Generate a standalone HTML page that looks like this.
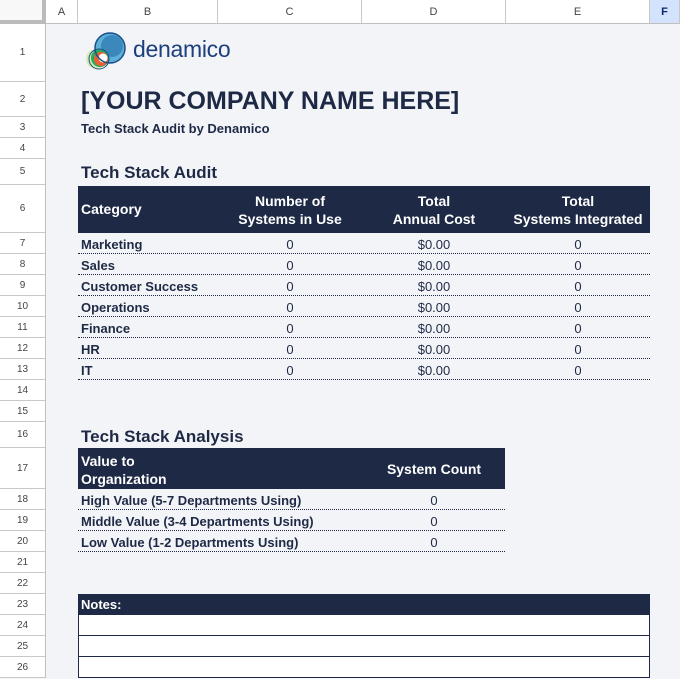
<!DOCTYPE html>
<html><head><meta charset="utf-8"><style>
*{margin:0;padding:0;box-sizing:border-box}
body{width:680px;height:679px;overflow:hidden;background:#f3f4f8;font-family:"Liberation Sans",Arial,sans-serif;position:relative;color:#1e2a45}
.a{position:absolute}
.ch{position:absolute;top:0;height:24px;background:#fff;border-right:1px solid #c8c8c8;border-bottom:1px solid #c0c0c0;font-size:11px;color:#444;text-align:center;line-height:24px}
.rh{position:absolute;left:0;width:46px;background:#fff;border-right:1px solid #c0c0c0;border-bottom:1px solid #c8c8c8;font-size:10px;color:#444;text-align:center}
.hd{position:absolute;background:#1e2a45;color:#fff;font-weight:bold;font-size:14px}
.t{position:absolute;font-size:13px;font-weight:bold;white-space:nowrap}
.n{position:absolute;font-size:13px;text-align:center}
.dl{position:absolute;height:0;border-top:1px dotted #1e2a45}
</style></head><body>
<div class="ch" style="left:0;width:46px;background:#f8f8f8;border-right:4px solid #bbb;border-bottom:4px solid #bbb"></div>
<div class="ch" style="left:46px;width:32px">A</div>
<div class="ch" style="left:78px;width:140px">B</div>
<div class="ch" style="left:218px;width:144px">C</div>
<div class="ch" style="left:362px;width:144px">D</div>
<div class="ch" style="left:506px;width:144px">E</div>
<div class="ch" style="left:650px;width:30px;background:#d3e3fd;color:#0b2a6b;font-weight:bold">F</div>
<div id="rows"></div>
<script>
var b=[24,82,117,138,159,185,233,254,275,296,317,338,359,380,401,422,448,489,510,531,552,573,594,615,636,657,678,700];
var h='';for(var i=0;i<26;i++){var t=b[i],hh=b[i+1]-t;h+='<div class="rh" style="top:'+t+'px;height:'+hh+'px;line-height:'+hh+'px">'+(i+1)+'</div>';}
document.getElementById('rows').innerHTML=h;
</script>
<svg class="a" style="left:84px;top:30px" width="46" height="44" viewBox="0 0 46 44">
<ellipse cx="12" cy="29" rx="10" ry="10" fill="#d6ebb0"/>
<circle cx="26" cy="18" r="15" fill="#5fb0d8"/>
<circle cx="28" cy="16" r="11" fill="#2c78b0" opacity=".7"/>
<circle cx="16" cy="28" r="9" fill="#2aa860"/>
<circle cx="17" cy="29" r="7" fill="#e86030"/>
<circle cx="19" cy="28" r="4.5" fill="#fff"/>
<circle cx="26" cy="18" r="15" fill="none" stroke="#1a4e8a" stroke-width="1.5"/>
<circle cx="15" cy="29" r="10" fill="none" stroke="#1a4e8a" stroke-width="1"/>
</svg>
<div class="a" style="left:133px;top:36px;font-size:23px;color:#1b3f7c;letter-spacing:-0.3px">denamico</div>
<div class="t" style="left:81px;top:87px;font-size:25px">[YOUR COMPANY NAME HERE]</div>
<div class="t" style="left:81px;top:121px;font-size:13px">Tech Stack Audit by Denamico</div>
<div class="t" style="left:81px;top:163px;font-size:17px">Tech Stack Audit</div>
<div class="hd" style="left:78px;top:186px;width:572px;height:47px"></div>
<div class="t" style="left:81px;top:201px;color:#fff;font-size:14px">Category</div>
<div class="t" style="left:218px;width:144px;top:192px;color:#fff;font-size:14px;text-align:center;line-height:18px">Number of<br>Systems in Use</div>
<div class="t" style="left:362px;width:144px;top:192px;color:#fff;font-size:14px;text-align:center;line-height:18px">Total<br>Annual Cost</div>
<div class="t" style="left:506px;width:144px;top:192px;color:#fff;font-size:14px;text-align:center;line-height:18px">Total<br>Systems Integrated</div>
<div id="d1"></div>
<div class="t" style="left:81px;top:427px;font-size:17px">Tech Stack Analysis</div>
<div class="hd" style="left:78px;top:448px;width:427px;height:41px"></div>
<div class="t" style="left:81px;top:452px;color:#fff;font-size:14px;line-height:18px">Value to<br>Organization</div>
<div class="t" style="left:362px;width:144px;top:461px;color:#fff;font-size:14px;text-align:center">System Count</div>
<div class="hd" style="left:78px;top:594px;width:572px;height:21px;font-size:13px;line-height:21px;padding-left:3px">Notes:</div>
<div class="a" style="left:78px;top:615px;width:572px;height:21px;background:#fff;border:1px solid #1e2a45;border-top:0"></div>
<div class="a" style="left:78px;top:636px;width:572px;height:21px;background:#fff;border:1px solid #1e2a45;border-top:0"></div>
<div class="a" style="left:78px;top:657px;width:572px;height:21px;background:#fff;border:1px solid #1e2a45;border-top:0"></div>
<script>
var c=['Marketing','Sales','Customer Success','Operations','Finance','HR','IT'],s='';
for(var i=0;i<7;i++){var t=233+i*21;
s+='<div class="t" style="left:81px;top:'+(t+4)+'px">'+c[i]+'</div>';
s+='<div class="n" style="left:218px;width:144px;top:'+(t+4)+'px">0</div>';
s+='<div class="n" style="left:362px;width:144px;top:'+(t+4)+'px">$0.00</div>';
s+='<div class="n" style="left:506px;width:144px;top:'+(t+4)+'px">0</div>';
s+='<div class="dl" style="left:78px;width:572px;top:'+(t+20)+'px"></div>';}
var v=['High Value (5-7 Departments Using)','Middle Value (3-4 Departments Using)','Low Value (1-2 Departments Using)'];
for(var i=0;i<3;i++){var t=489+i*21;
s+='<div class="t" style="left:81px;top:'+(t+4)+'px">'+v[i]+'</div>';
s+='<div class="n" style="left:362px;width:144px;top:'+(t+4)+'px">0</div>';
s+='<div class="dl" style="left:78px;width:427px;top:'+(t+20)+'px"></div>';}
document.getElementById('d1').innerHTML=s;
</script>
</body></html>
